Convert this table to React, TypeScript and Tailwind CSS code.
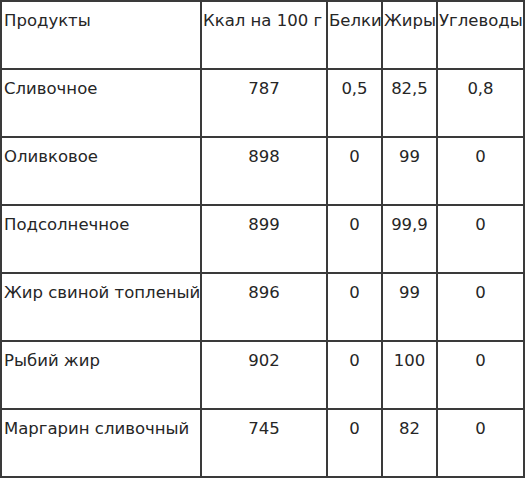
import React from "react";

const rows = [
  { name: "Сливочное", kcal: "787", p: "0,5", f: "82,5", c: "0,8" },
  { name: "Оливковое", kcal: "898", p: "0", f: "99", c: "0" },
  { name: "Подсолнечное", kcal: "899", p: "0", f: "99,9", c: "0" },
  { name: "Жир свиной топленый", kcal: "896", p: "0", f: "99", c: "0" },
  { name: "Рыбий жир", kcal: "902", p: "0", f: "100", c: "0" },
  { name: "Маргарин сливочный", kcal: "745", p: "0", f: "82", c: "0" },
];

const cell = "border-2 border-[#3a3a3a] align-top pt-[8px] h-[68px] whitespace-nowrap";

export default function App() {
  return (
    <div className="w-[525px] h-[481px] bg-white text-[#262626] font-['DejaVu_Sans',sans-serif] text-[16.5px] leading-[22px]">
      <table className="border-collapse table-fixed w-[523px]">
        <colgroup>
          <col className="w-[200px]" />
          <col className="w-[126px]" />
          <col className="w-[55px]" />
          <col className="w-[55px]" />
          <col className="w-[87px]" />
        </colgroup>
        <thead>
          <tr>
            <th className={`${cell} font-normal text-left pl-[2px]`}>Продукты</th>
            <th className={`${cell} font-normal text-left pl-[1px]`}>Ккал на 100 г</th>
            <th className={`${cell} font-normal text-left pl-[1px]`}>Белки</th>
            <th className={`${cell} font-normal text-left pl-[1px]`}>Жиры</th>
            <th className={`${cell} font-normal text-left pl-[1px]`}>Углеводы</th>
          </tr>
        </thead>
        <tbody>
          {rows.map((r) => (
            <tr key={r.name}>
              <td className={`${cell} text-left pl-[2px]`}>{r.name}</td>
              <td className={`${cell} text-center`}>{r.kcal}</td>
              <td className={`${cell} text-center`}>{r.p}</td>
              <td className={`${cell} text-center`}>{r.f}</td>
              <td className={`${cell} text-center`}>{r.c}</td>
            </tr>
          ))}
        </tbody>
      </table>
    </div>
  );
}
